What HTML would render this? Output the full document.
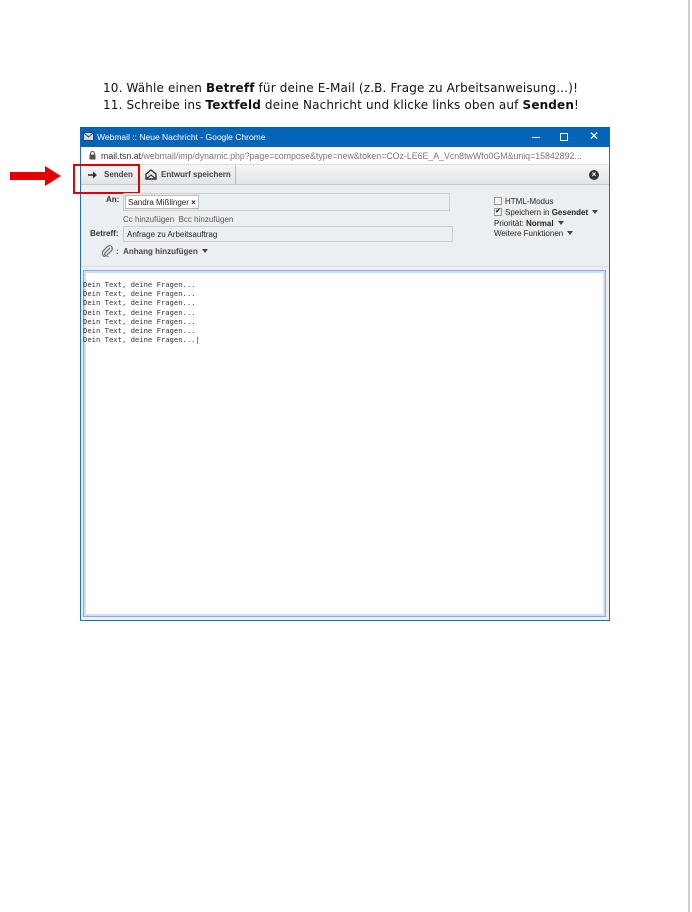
<!DOCTYPE html>
<html><head><meta charset="utf-8"><style>
*{margin:0;padding:0;box-sizing:border-box}
body{width:692px;height:912px;background:#fff;position:relative;overflow:hidden;font-family:"Liberation Sans",sans-serif}
.a{position:absolute}
.inst{font-family:"DejaVu Sans",sans-serif;font-size:12px;color:#111;left:103px;white-space:nowrap;letter-spacing:0.15px}
.sm{font-size:8px;color:#222;white-space:nowrap}
.mono{font-family:"DejaVu Sans Mono","Liberation Mono",monospace;font-size:7.2px;line-height:9.2px;color:#333;white-space:pre}
.tri{display:inline-block;width:0;height:0;border-left:3.5px solid transparent;border-right:3.5px solid transparent;border-top:4px solid #444;margin-left:4px;vertical-align:1px}
</style></head><body>
<div class="a" style="left:688px;top:0;width:2px;height:912px;background:#d0d0d0"></div>
<div class="a inst" style="top:81px">10. Wähle einen <b>Betreff</b> für deine E-Mail (z.B. Frage zu Arbeitsanweisung…)!</div>
<div class="a inst" style="top:98px">11. Schreibe ins <b>Textfeld</b> deine Nachricht und klicke links oben auf <b>Senden</b>!</div>

<svg class="a" style="left:10px;top:165px" width="52" height="22"><polygon points="0,7 35,7 35,1 51,11 35,21 35,15 0,15" fill="#e60000"/></svg>

<div class="a" style="left:80px;top:127px;width:530px;height:494px;border:1px solid #1d6fc0;background:#eceff1"></div>
<div class="a" style="left:80px;top:127px;width:530px;height:20px;background:#0465b8"></div>
<svg class="a" style="left:83px;top:132px" width="11" height="9"><rect x="0.5" y="0.5" width="10" height="8" fill="#cde" stroke="#345"/><path d="M0.5 0.5 L5.5 5 L10.5 0.5" fill="none" stroke="#345"/></svg>
<div class="a sm" style="left:97px;top:132px;color:#fff;font-size:8.5px">Webmail :: Neue Nachricht - Google Chrome</div>
<div class="a" style="left:532px;top:137px;width:8px;height:1px;background:#fff"></div>
<div class="a" style="left:560px;top:133px;width:8px;height:8px;border:1px solid #fff"></div>
<div class="a sm" style="left:589px;top:129px;color:#fff;font-size:12px">✕</div>
<div class="a" style="left:81px;top:147px;width:528px;height:18px;background:#fff;border-bottom:1px solid #ddd"></div>
<svg class="a" style="left:89px;top:151px" width="7" height="9"><rect x="0.5" y="3.5" width="6" height="5" fill="#555"/><path d="M1.5 4V2.5a2 2 0 0 1 4 0V4" fill="none" stroke="#555"/></svg>
<div class="a sm" style="left:101px;top:151px;font-size:8.8px;color:#333">mail.tsn.at<span style="color:#777">/webmail/imp/dynamic.php?page=compose&amp;type=new&amp;token=COz-LE6E_A_Vcn8twWfo0GM&amp;uniq=15842892...</span></div>
<div class="a" style="left:81px;top:165px;width:528px;height:20px;background:linear-gradient(#f6f6f6,#e4e4e4);border-bottom:1px solid #c8c8c8"></div>
<div class="a" style="left:138px;top:166px;width:1px;height:18px;background:#bbb"></div>
<div class="a" style="left:235px;top:166px;width:1px;height:18px;background:#bbb"></div>
<svg class="a" style="left:88px;top:171px" width="10" height="8"><path d="M0 4H7" stroke="#333" stroke-width="1.6"/><path d="M5 0.5L9 4L5 7.5Z" fill="#333"/></svg>
<div class="a sm" style="left:104px;top:170px;font-weight:bold;color:#444">Senden</div>
<svg class="a" style="left:145px;top:169px" width="12" height="11"><path d="M1 5 L6 1 L11 5 V10 H1 Z" fill="none" stroke="#333" stroke-width="1.4"/><path d="M1 10 L6 6 L11 10" fill="none" stroke="#333" stroke-width="1.2"/></svg>
<div class="a sm" style="left:161px;top:170px;font-weight:bold;color:#444">Entwurf speichern</div>
<div class="a" style="left:589px;top:170px;width:10px;height:10px;border-radius:50%;background:#333;color:#fff;font-size:8px;line-height:10px;text-align:center;font-weight:bold">×</div>
<div class="a" style="left:73px;top:164px;width:67px;height:30px;border:2px solid #e00000"></div>
<div class="a sm" style="left:106px;top:195px;font-weight:bold;color:#333">An:</div>
<div class="a" style="left:123px;top:193px;width:327px;height:18px;border:1px solid #ccc;background:#eceff1"></div>
<div class="a sm" style="left:125px;top:195px;height:14px;padding:2px 2px 0;border:1px solid #bbb;background:#fff">Sandra Mißlinger <b>×</b></div>
<div class="a sm" style="left:123px;top:215px;color:#555">Cc hinzufügen &nbsp;Bcc hinzufügen</div>
<div class="a sm" style="left:90px;top:229px;font-weight:bold;color:#333">Betreff:</div>
<div class="a" style="left:123px;top:226px;width:330px;height:16px;border:1px solid #ccc;background:#eceff1"></div>
<div class="a sm" style="left:127px;top:230px">Anfrage zu Arbeitsauftrag</div>
<svg class="a" style="left:101px;top:245px" width="12" height="12"><path d="M9 3 L4 8 a1.4 1.4 0 0 0 2 2 L10.5 5.5 a2.8 2.8 0 0 0 -4 -4 L2 6 a4 4 0 0 0 5.5 5.5" fill="none" stroke="#666" stroke-width="1.2"/></svg>
<div class="a sm" style="left:116px;top:247px;font-weight:bold;color:#444">: &nbsp;Anhang hinzufügen<span class="tri"></span></div>
<div class="a" style="left:494px;top:197px;width:8px;height:8px;border:1px solid #999;background:#f3f3f3"></div>
<div class="a sm" style="left:505px;top:197px">HTML-Modus</div>
<div class="a" style="left:494px;top:208px;width:8px;height:8px;border:1px solid #999;background:#f3f3f3;font-size:7px;line-height:6px">✔</div>
<div class="a sm" style="left:505px;top:208px">Speichern in <b>Gesendet</b><span class="tri"></span></div>
<div class="a sm" style="left:494px;top:219px">Priorität: <b>Normal</b><span class="tri"></span></div>
<div class="a sm" style="left:494px;top:229px">Weitere Funktionen<span class="tri"></span></div>
<div class="a" style="left:81px;top:266px;width:528px;height:1px;background:#dde"></div>
<div class="a" style="left:83px;top:270px;width:523px;height:347px;border:1px solid #7fb0e0;box-shadow:inset 0 0 0 2px #cfe0f6;background:#fff"></div>
<div class="a mono" style="left:83px;top:280px">Dein Text, deine Fragen...
Dein Text, deine Fragen...
Dein Text, deine Fragen...
Dein Text, deine Fragen...
Dein Text, deine Fragen...
Dein Text, deine Fragen...
Dein Text, deine Fragen...|</div>
</body></html>
